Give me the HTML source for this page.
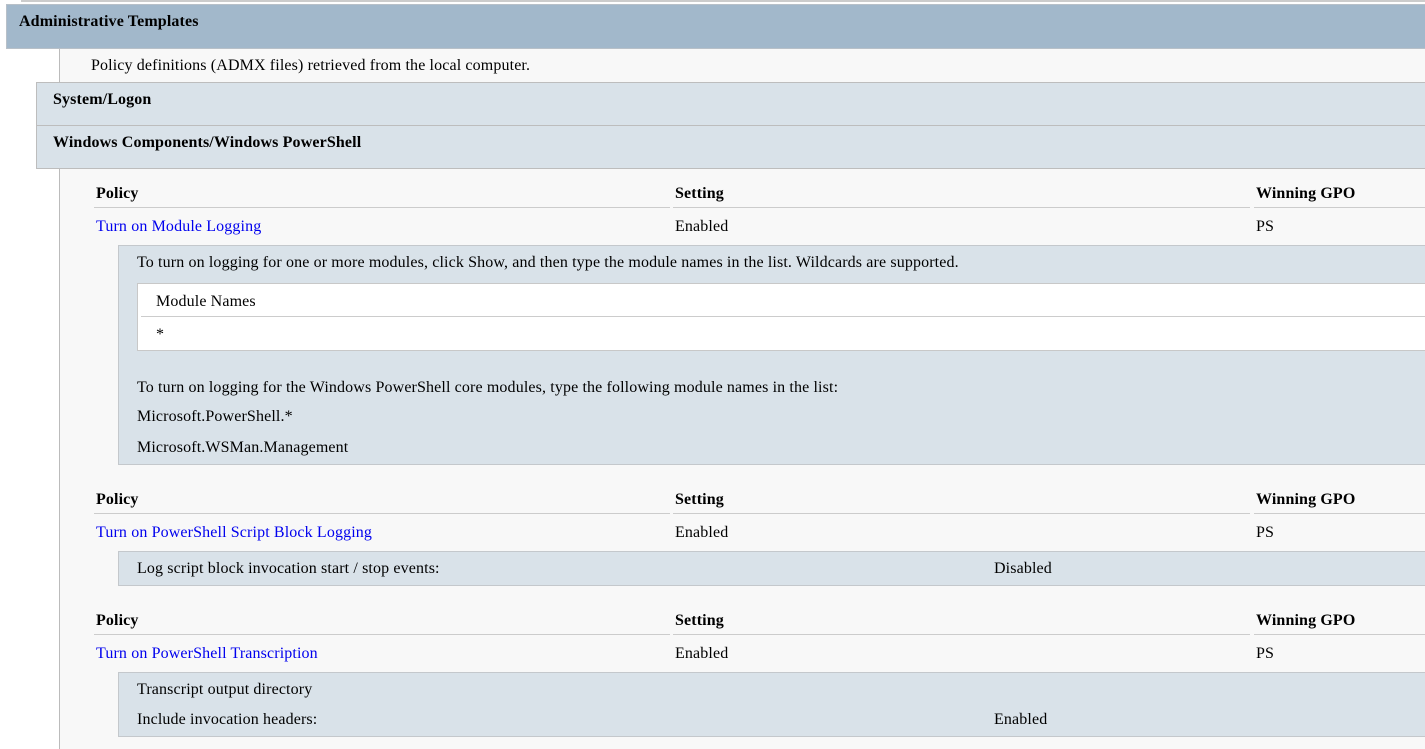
<!DOCTYPE html>
<html><head><meta charset="utf-8"><style>
body{margin:0;width:1425px;height:744px;overflow:hidden;background:#fff;font-family:"Liberation Serif",serif;font-size:16px;letter-spacing:0.13px;color:#000;position:relative}
div{position:absolute;box-sizing:border-box}
.t{white-space:nowrap;line-height:18px;margin-top:1px}
.b{font-weight:bold}
.a{color:#0000ee}
.hl{height:1px;background:#ccc}
.box{background:#d9e2e9;border:1px solid #c4c8cc}
</style></head><body>
<div style="left:21px;top:0;width:1404px;height:2px;background:#ccc"></div>
<div style="left:6px;top:4px;width:1430px;height:45px;background:#a2b8cb;border:1px solid #b8c0c8"></div>
<div class="t b" style="left:19px;top:12px">Administrative Templates</div>
<div style="left:59px;top:49px;width:1370px;height:700px;background:#f8f8f8;border-left:1px solid #bbb"></div>
<div class="t" style="left:91px;top:56px">Policy definitions (ADMX files) retrieved from the local computer.</div>
<div style="left:36px;top:82px;width:1400px;height:44px;background:#d9e2e9;border:1px solid #bdbdbd"></div>
<div class="t b" style="left:53px;top:90px">System/Logon</div>
<div style="left:36px;top:125px;width:1400px;height:44px;background:#d9e2e9;border:1px solid #bdbdbd"></div>
<div class="t b" style="left:53px;top:133px">Windows Components/Windows PowerShell</div>

<!-- table 1 -->
<div class="t b" style="left:96px;top:184px">Policy</div>
<div class="t b" style="left:675px;top:184px">Setting</div>
<div class="t b" style="left:1256px;top:184px">Winning GPO</div>
<div class="hl" style="left:94px;top:207px;width:576px"></div>
<div class="hl" style="left:673px;top:207px;width:577px"></div>
<div class="hl" style="left:1254px;top:207px;width:180px"></div>
<div class="t a" style="left:96px;top:217px">Turn on Module Logging</div>
<div class="t" style="left:675px;top:217px">Enabled</div>
<div class="t" style="left:1256px;top:217px">PS</div>
<div class="box" style="left:118px;top:245px;width:1320px;height:220px"></div>
<div class="t" style="left:137px;top:253px">To turn on logging for one or more modules, click Show, and then type the module names in the list. Wildcards are supported.</div>
<div style="left:137px;top:283px;width:1300px;height:68px;background:#fff;border:1px solid #c8c8c8"></div>
<div class="hl" style="left:141px;top:316px;width:1290px"></div>
<div class="t" style="left:156px;top:292px">Module Names</div>
<div class="t" style="left:156px;top:325px">*</div>
<div class="t" style="left:137px;top:378px">To turn on logging for the Windows PowerShell core modules, type the following module names in the list:</div>
<div class="t" style="left:137px;top:407px">Microsoft.PowerShell.*</div>
<div class="t" style="left:137px;top:438px">Microsoft.WSMan.Management</div>

<!-- table 2 -->
<div class="t b" style="left:96px;top:490px">Policy</div>
<div class="t b" style="left:675px;top:490px">Setting</div>
<div class="t b" style="left:1256px;top:490px">Winning GPO</div>
<div class="hl" style="left:94px;top:513px;width:576px"></div>
<div class="hl" style="left:673px;top:513px;width:577px"></div>
<div class="hl" style="left:1254px;top:513px;width:180px"></div>
<div class="t a" style="left:96px;top:523px">Turn on PowerShell Script Block Logging</div>
<div class="t" style="left:675px;top:523px">Enabled</div>
<div class="t" style="left:1256px;top:523px">PS</div>
<div class="box" style="left:118px;top:551px;width:1320px;height:35px"></div>
<div class="t" style="left:137px;top:559px">Log script block invocation start / stop events:</div>
<div class="t" style="left:994px;top:559px">Disabled</div>

<!-- table 3 -->
<div class="t b" style="left:96px;top:611px">Policy</div>
<div class="t b" style="left:675px;top:611px">Setting</div>
<div class="t b" style="left:1256px;top:611px">Winning GPO</div>
<div class="hl" style="left:94px;top:634px;width:576px"></div>
<div class="hl" style="left:673px;top:634px;width:577px"></div>
<div class="hl" style="left:1254px;top:634px;width:180px"></div>
<div class="t a" style="left:96px;top:644px">Turn on PowerShell Transcription</div>
<div class="t" style="left:675px;top:644px">Enabled</div>
<div class="t" style="left:1256px;top:644px">PS</div>
<div class="box" style="left:118px;top:672px;width:1320px;height:65px"></div>
<div class="t" style="left:137px;top:680px">Transcript output directory</div>
<div class="t" style="left:137px;top:710px">Include invocation headers:</div>
<div class="t" style="left:994px;top:710px">Enabled</div>
</body></html>
